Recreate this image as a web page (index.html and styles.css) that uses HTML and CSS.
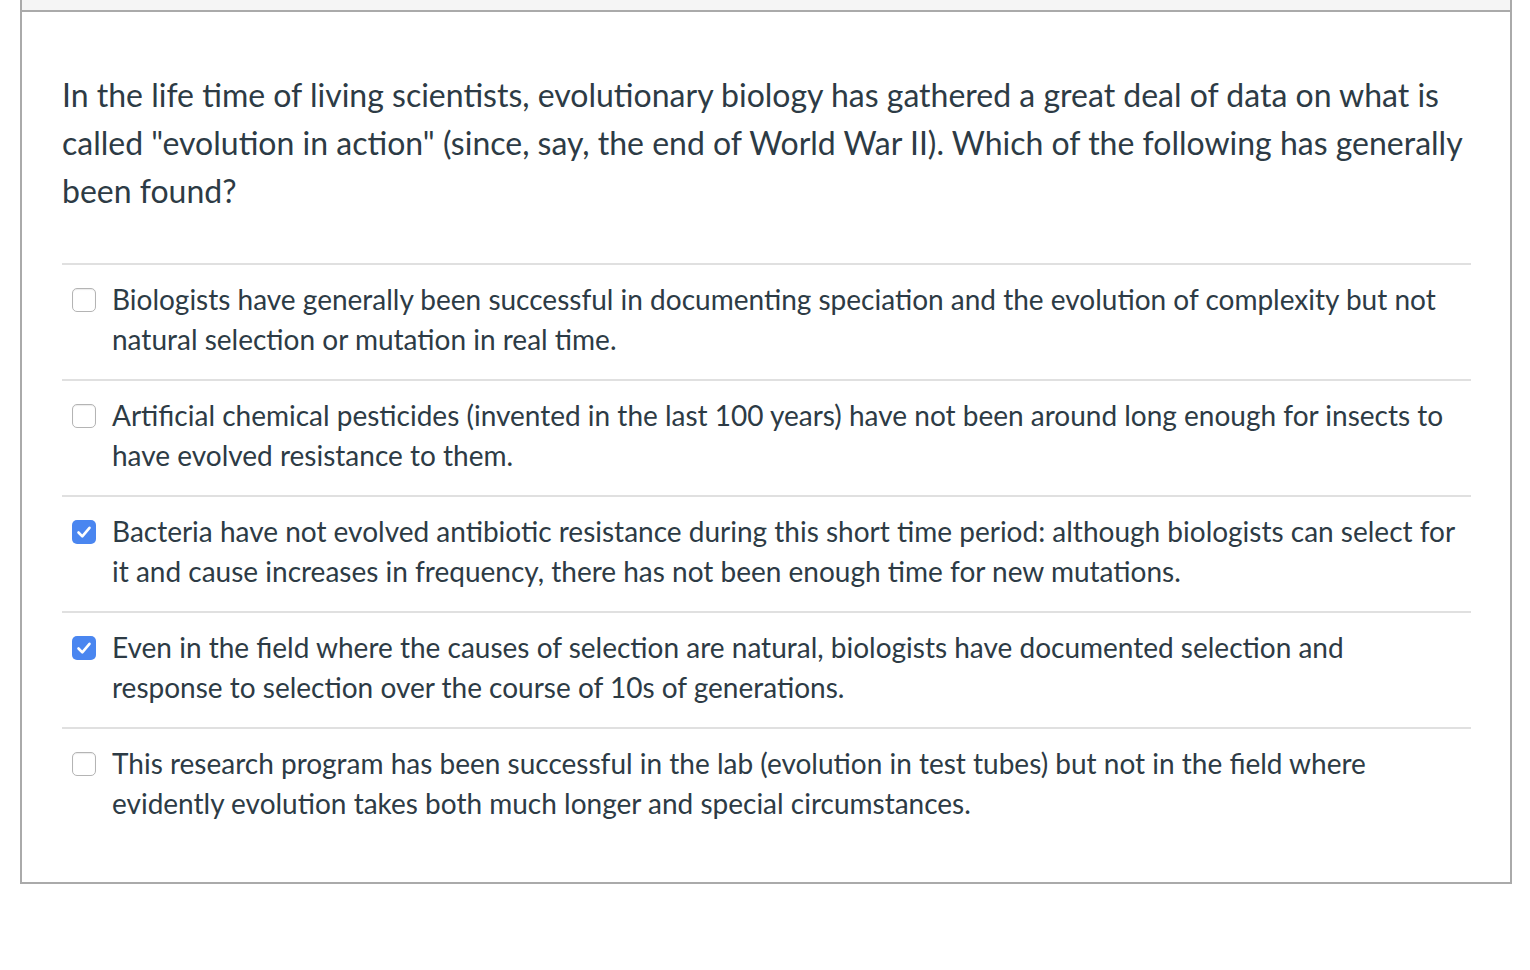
FILE: index.html
```html
<!DOCTYPE html>
<html>
<head>
	<meta charset="UTF-8">
	<title>Question</title>
	<link rel="stylesheet" href="styles.css">
</head>
<body>
	<div class="question">
		<div class="header"></div>
		<div class="content">
			<p class="text">In the life time of living scientists, evolutionary biology has gathered a great deal of data on what is called "evolution in action" (since, say, the end of World War II). Which of the following has generally been found?</p>
			<div class="answers">
				<label class="answer"><span class="box"></span><span class="label">Biologists have generally been successful in documenting speciation and the evolution of complexity but not natural selection or mutation in real time.</span></label>
				<label class="answer"><span class="box"></span><span class="label">Artificial chemical pesticides (invented in the last 100 years) have not been around long enough for insects to have evolved resistance to them.</span></label>
				<label class="answer"><span class="box checked"><svg viewBox="0 0 24 24" width="24" height="24"><path d="M6.5 12.5 L10.3 16.3 L17.5 7.8" fill="none" stroke="#fff" stroke-width="2.6" stroke-linecap="round" stroke-linejoin="round"/></svg></span><span class="label">Bacteria have not evolved antibiotic resistance during this short time period: although biologists can select for it and cause increases in frequency, there has not been enough time for new mutations.</span></label>
				<label class="answer"><span class="box checked"><svg viewBox="0 0 24 24" width="24" height="24"><path d="M6.5 12.5 L10.3 16.3 L17.5 7.8" fill="none" stroke="#fff" stroke-width="2.6" stroke-linecap="round" stroke-linejoin="round"/></svg></span><span class="label">Even in the field where the causes of selection are natural, biologists have documented selection and response to selection over the course of 10s of generations.</span></label>
				<label class="answer"><span class="box"></span><span class="label">This research program has been successful in the lab (evolution in test tubes) but not in the field where evidently evolution takes both much longer and special circumstances.</span></label>
			</div>
		</div>
	</div>
</body>
</html>
```

FILE: styles.css
```css
body { margin: 0; background: #fff; font-family: Lato, "Open Sans", sans-serif; color: #2d3b45; }
.question { margin-left: 20px; width: 1488px; border: 2px solid #aaa; border-top: none; }
.header { height: 10px; background: #f5f5f5; border-bottom: 2px solid #aaa; }
.content { padding: 59px 39px 39px 40px; }
.text { margin: 0 0 48px; font-size: 32px; line-height: 48px; }
.answer { display: flex; align-items: flex-start; border-top: 2px solid #e0e0e0; padding: 14px 12px 20px 0; }
.box { flex: none; width: 22px; height: 22px; margin: 9px 16px 0 10px; border: 1px solid #b4b4b4; border-radius: 5px; background: #fff; box-shadow: inset 0 1px 1px rgba(0,0,0,0.08); }
.box.checked { width: 24px; height: 24px; border: none; background: #4a86f0; box-shadow: none; }
.box svg { display: block; }
.label { font-size: 28px; line-height: 40px; }
```
